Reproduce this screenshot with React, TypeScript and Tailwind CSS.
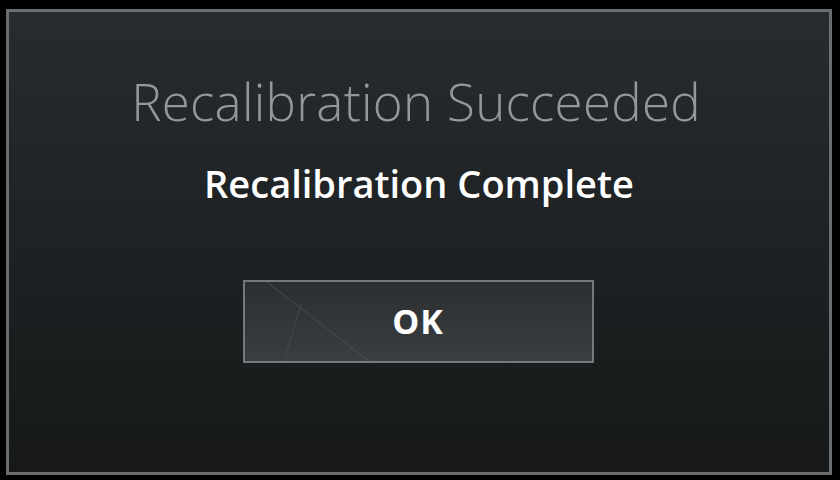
import React from "react";

export default function App() {
  return (
    <div className="w-[840px] h-[480px] bg-black pt-[9px] pl-[6px] pr-[8px] pb-[5px]">
      <div className="h-full w-full border-[3px] border-[#6b6e70] bg-gradient-to-b from-[#272c2e] to-[#161819] flex flex-col items-center">
        <div
          className="mt-[64px] ml-[-6px] text-[51px] leading-none text-[#95989a] font-light tracking-[0.3px]"
          style={{ fontFamily: '"Open Sans", "DejaVu Sans", sans-serif' }}
        >
          Recalibration Succeeded
        </div>
        <div
          className="mt-[37px] text-[38px] leading-none text-white font-semibold"
          style={{ fontFamily: '"Open Sans", "DejaVu Sans", sans-serif' }}
        >
          Recalibration Complete
        </div>
        <button className="relative mt-[78px] ml-[-2px] w-[351px] h-[83px] border-2 border-[#76797b] bg-gradient-to-b from-[#2b2f31] to-[#3a3e41] overflow-hidden">
          <svg className="absolute inset-0" width="351" height="83" viewBox="0 0 351 83">
            <path d="M22 0 L125 80" stroke="#4a4e51" strokeWidth="1" fill="none" />
            <path d="M56 22 L38 83" stroke="#44484b" strokeWidth="1" fill="none" />
          </svg>
          <span
            className="relative text-[34px] font-bold text-white tracking-[1px]"
            style={{ fontFamily: '"Open Sans", "DejaVu Sans", sans-serif' }}
          >
            OK
          </span>
        </button>
      </div>
    </div>
  );
}
